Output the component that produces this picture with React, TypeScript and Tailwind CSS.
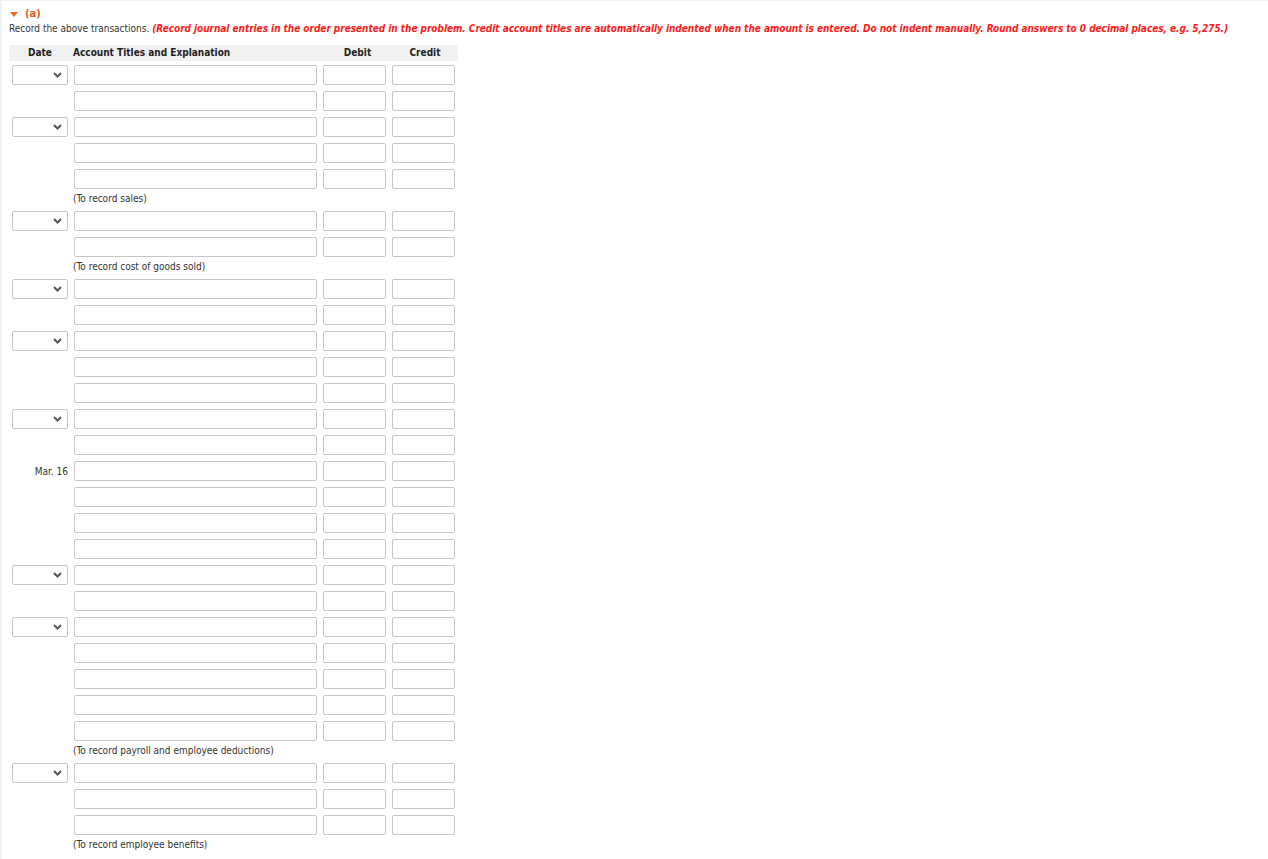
import React from "react";

type Row =
  | { kind: "row"; date?: "select" | string }
  | { kind: "note"; text: string };

const rows: Row[] = [
  { kind: "row", date: "select" },
  { kind: "row" },
  { kind: "row", date: "select" },
  { kind: "row" },
  { kind: "row" },
  { kind: "note", text: "(To record sales)" },
  { kind: "row", date: "select" },
  { kind: "row" },
  { kind: "note", text: "(To record cost of goods sold)" },
  { kind: "row", date: "select" },
  { kind: "row" },
  { kind: "row", date: "select" },
  { kind: "row" },
  { kind: "row" },
  { kind: "row", date: "select" },
  { kind: "row" },
  { kind: "row", date: "Mar. 16" },
  { kind: "row" },
  { kind: "row" },
  { kind: "row" },
  { kind: "row", date: "select" },
  { kind: "row" },
  { kind: "row", date: "select" },
  { kind: "row" },
  { kind: "row" },
  { kind: "row" },
  { kind: "row" },
  { kind: "note", text: "(To record payroll and employee deductions)" },
  { kind: "row", date: "select" },
  { kind: "row" },
  { kind: "row" },
  { kind: "note", text: "(To record employee benefits)" },
];

function Select() {
  return (
    <div className="ml-[3px] flex h-[20px] w-[56px] items-center justify-end rounded-[2px] border border-[#c6c6c6] bg-white pr-[5px]">
      <svg width="9" height="6" viewBox="0 0 9 6">
        <path d="M1 1 L4.5 4.5 L8 1" fill="none" stroke="#555" strokeWidth="2" />
      </svg>
    </div>
  );
}

function Box({ w }: { w: string }) {
  return <div className={`h-[20px] ${w} rounded-[2px] border border-[#c6c6c6] bg-white`} />;
}

export default function App() {
  return (
    <div
      className="min-h-screen border-l-[2px] border-t-[1px] border-[#eef2f6] bg-white text-[10px] text-[#333]"
      style={{ fontFamily: '"DejaVu Sans Condensed", "DejaVu Sans", sans-serif' }}
    >
      <div className="pl-[7px] pt-[6px]">
        <div className="flex h-[14px] items-center gap-[7px] pl-[1px]">
          <svg width="8" height="5" viewBox="0 0 8 5">
            <path d="M0 0 H8 L4 5 Z" fill="#f26b1d" />
          </svg>
          <span className="text-[11px] font-bold text-[#e35b16]">(a)</span>
        </div>
        <div className="mt-[1px] h-[14px] leading-[14px] whitespace-nowrap">
          Record the above transactions.{" "}
          <span className="font-bold italic tracking-[-0.04px] text-[#ff1a1a]">
            (Record journal entries in the order presented in the problem. Credit account titles are automatically indented when the amount is entered. Do not indent manually. Round answers to 0 decimal places, e.g. 5,275.)
          </span>
        </div>
        <div className="mt-[9px] w-[449px]">
          <div className="flex h-[16px] items-center bg-[#f2f2f2] pb-[1px] font-bold text-[#222]">
            <div className="w-[62px] text-center">Date</div>
            <div className="w-[252px] pl-[2px]">Account Titles and Explanation</div>
            <div className="w-[69px] text-center">Debit</div>
            <div className="w-[66px] text-center">Credit</div>
          </div>
          <div className="pt-[1px]">
            {rows.map((r, i) =>
              r.kind === "row" ? (
                <div key={i} className="flex h-[26px] items-center">
                  <div className="flex w-[65px] items-center justify-end pr-[6px]">
                    {r.date === "select" ? (
                      <div className="w-full">
                        <Select />
                      </div>
                    ) : r.date ? (
                      <span className="text-[#333]">{r.date}</span>
                    ) : null}
                  </div>
                  <Box w="w-[243px]" />
                  <div className="w-[6px]" />
                  <Box w="w-[63px]" />
                  <div className="w-[6px]" />
                  <Box w="w-[63px]" />
                </div>
              ) : (
                <div key={i} className="flex h-[16px] items-center pb-[4px] pl-[64px]">
                  {r.text}
                </div>
              )
            )}
          </div>
        </div>
      </div>
    </div>
  );
}
